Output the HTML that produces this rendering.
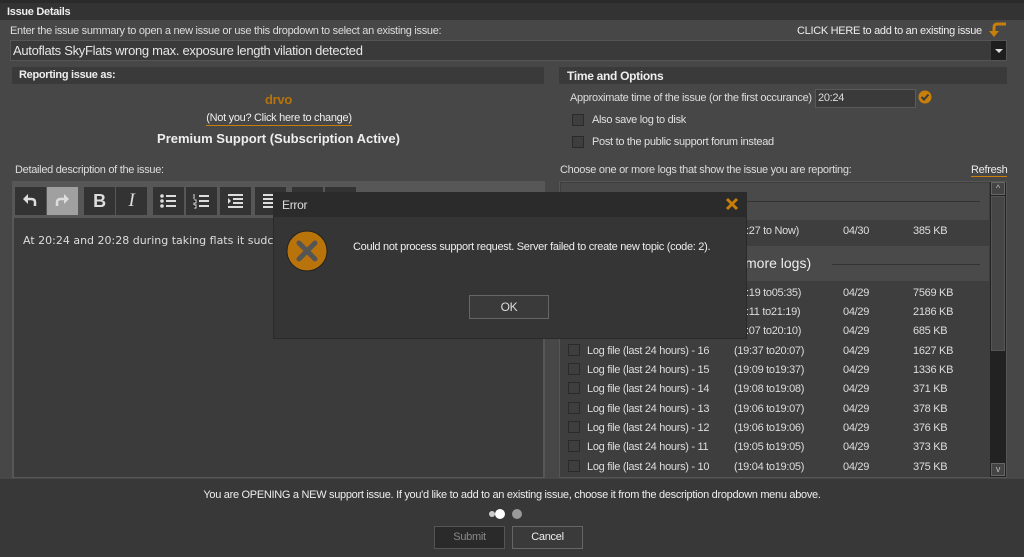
<!DOCTYPE html>
<html><head><meta charset="utf-8"><style>
*{box-sizing:border-box;margin:0;padding:0}
body{width:1024px;height:557px;overflow:hidden;background:#474747;font-family:"Liberation Sans",sans-serif;font-size:11px;color:#e0e0e0;position:relative;letter-spacing:-0.3px}
.a{position:absolute;white-space:nowrap}
.hdr{position:absolute;background:#3a3a3a;font-weight:bold;font-size:11px;color:#eee;padding:2px 0 0 8px;height:17px}
.cb{position:absolute;width:12px;height:12px;border:1px solid #2a2a2a;background:#3e3e3e}
.tb{position:absolute;top:187px;width:31px;height:28px;background:#333;color:#ddd;font-size:17px;text-align:center;line-height:28px}
.tb svg{position:absolute;left:7px;top:6px}
.row{position:absolute;left:560px;width:430px;height:19px;color:#ddd}
.row span{position:absolute;top:3px}
</style></head><body>
<div class="a" style="left:0;top:0;width:1024px;height:20px;background:#333"></div>
<div class="a" style="left:0;top:0;width:1024px;height:3px;background:#2a2a2a"></div>
<div class="a" style="left:7px;top:6px;font-weight:bold;color:#eee">Issue Details</div>
<div class="a" style="left:10px;top:25px;color:#ddd">Enter the issue summary to open a new issue or use this dropdown to select an existing issue:</div>
<div class="a" style="left:797px;top:25px;color:#eee">CLICK HERE to add to an existing issue</div>
<svg class="a" style="left:988px;top:21px" width="20" height="18" viewBox="0 0 20 18"><path d="M18 3 H9 Q6 3 6 7 V11" stroke="#c87f0a" stroke-width="3" fill="none"/><path d="M1 10 L11 10 L6 16Z" fill="#c87f0a"/></svg>
<div class="a" style="left:10px;top:40px;width:997px;height:21px;background:#3a3a3a;border:1px solid #555;font-size:13px;color:#e6e6e6;padding:2px 0 0 2px">Autoflats SkyFlats wrong max. exposure length vilation detected</div>
<div class="a" style="left:991px;top:41px;width:15px;height:19px;background:#1e1e1e"></div>
<div class="a" style="left:995px;top:49px;border:4px solid transparent;border-top:4px solid #ddd"></div>
<div class="hdr" style="left:12px;top:67px;width:532px;padding-left:7px">Reporting issue as:</div>
<div class="hdr" style="left:559px;top:67px;width:448px;font-size:12px">Time and Options</div>
<div class="a" style="left:0;width:557px;text-align:center;top:92px;color:#b8730a;font-size:13px;font-weight:bold">drvo</div>
<div class="a" style="left:206px;top:112px;color:#eee;border-bottom:1px solid #c87f0a;padding-bottom:1px;width:146px;text-align:center">(Not you? Click here to change)</div>
<div class="a" style="left:0;width:557px;text-align:center;top:131px;font-size:13px;font-weight:bold;color:#eee;letter-spacing:0">Premium Support (Subscription Active)</div>
<div class="a" style="left:15px;top:164px;color:#ddd">Detailed description of the issue:</div>
<div class="a" style="left:12px;top:181px;width:533px;height:297px;background:#575757"></div>
<div class="a" style="left:14px;top:218px;width:529px;height:259px;background:#3b3b3b"></div>
<div class="tb" style="left:15px"><svg width="16" height="16"><path d="M13 13 V9 Q13 6 9 6 H3" stroke="#ddd" stroke-width="2.5" fill="none"/><path d="M1 6 L6 1 V11Z" fill="#ddd"/></svg></div>
<div class="tb" style="left:47px;background:#a0a0a0"><svg width="16" height="16"><path d="M3 13 V9 Q3 6 7 6 H13" stroke="#ddd" stroke-width="2.5" fill="none"/><path d="M15 6 L10 1 V11Z" fill="#ddd"/></svg></div>
<div class="tb" style="left:84px;font-weight:bold;font-size:18px">B</div>
<div class="tb" style="left:116px;font-style:italic;font-family:'Liberation Serif';font-size:19px">I</div>
<div class="tb" style="left:153px"><svg width="16" height="16"><circle cx="2" cy="3" r="1.8" fill="#ddd"/><circle cx="2" cy="8" r="1.8" fill="#ddd"/><circle cx="2" cy="13" r="1.8" fill="#ddd"/><path d="M6 3H16M6 8H16M6 13H16" stroke="#ddd" stroke-width="2"/></svg></div>
<div class="tb" style="left:186px"><svg width="16" height="16"><path d="M1 1V6M1 7H3V10H1V12M1 12H3V15H1" stroke="#ddd" stroke-width="1"/><path d="M6 3H16M6 8H16M6 13H16" stroke="#ddd" stroke-width="2"/></svg></div>
<div class="tb" style="left:220px"><svg width="16" height="16"><path d="M1 2H16M6 6H16M6 10H16M1 14H16" stroke="#ddd" stroke-width="2"/><path d="M1 5L4 8L1 11Z" fill="#ddd"/></svg></div>
<div class="tb" style="left:255px"><svg width="16" height="16"><path d="M1 2H16M1 6H11M1 10H11M1 14H16" stroke="#ddd" stroke-width="2"/><path d="M16 5L13 8L16 11Z" fill="#ddd"/></svg></div>
<div class="tb" style="left:292px"></div>
<div class="tb" style="left:325px"></div>
<div class="a" style="left:23px;top:234px;font-family:'DejaVu Sans';font-size:11px;color:#ddd;letter-spacing:0">At 20:24 and 20:28 during taking flats it sudc</div>
<div class="a" style="left:570px;top:92px;color:#ddd">Approximate time of the issue (or the first occurance)</div>
<div class="a" style="left:815px;top:89px;width:101px;height:19px;background:#3a3a3a;border:1px solid #5a5a5a;padding:2px 0 0 2px;color:#ddd">20:24</div>
<svg class="a" style="left:918px;top:90px" width="14" height="14"><circle cx="7" cy="7" r="6.5" fill="#c87f0a"/><path d="M3.5 7 L6 9.5 L10.5 4.5" stroke="#3a3a3a" stroke-width="2" fill="none"/></svg>
<div class="cb" style="left:572px;top:114px"></div><div class="a" style="left:592px;top:114px">Also save log to disk</div>
<div class="cb" style="left:572px;top:136px"></div><div class="a" style="left:592px;top:136px">Post to the public support forum instead</div>
<div class="a" style="left:560px;top:164px;color:#ddd">Choose one or more logs that show the issue you are reporting:</div>
<div class="a" style="left:971px;top:164px;color:#eee;border-bottom:1px solid #c87f0a">Refresh</div>
<div class="a" style="left:559px;top:181px;width:448px;height:297px;background:#3e3e3e;border:1px solid #555"></div>
<div class="a" style="left:561px;top:183px;width:428px;height:37px;background:#4a4a4a"></div>
<div class="a" style="left:740px;top:201px;width:240px;height:1px;background:#333"></div>
<div class="a" style="left:561px;top:246px;width:428px;height:35px;background:#4a4a4a"></div>
<div class="a" style="left:745px;top:255px;font-size:14px;color:#eee;letter-spacing:0">more logs)</div>
<div class="a" style="left:832px;top:264px;width:148px;height:1px;background:#333"></div>
<div class="a" style="left:990px;top:182px;width:16px;height:295px;background:#222"></div>
<div class="a" style="left:991px;top:182px;width:14px;height:13px;border:1px solid #666;background:#444;color:#bbb;font-size:9px;text-align:center;line-height:10px">^</div>
<div class="a" style="left:991px;top:196px;width:14px;height:155px;background:#464646;border:1px solid #555"></div>
<div class="a" style="left:991px;top:463px;width:14px;height:13px;border:1px solid #666;background:#444;color:#bbb;font-size:9px;text-align:center;line-height:10px">v</div>
<div class="row" style="top:222px"><span style="left:186px">:27 to Now)</span><span style="left:283px">04/30</span><span style="left:353px">385 KB</span></div>
<div class="row" style="top:284px"><span style="left:186px">:19 to05:35)</span><span style="left:283px">04/29</span><span style="left:353px">7569 KB</span></div>
<div class="row" style="top:303px"><span style="left:186px">:11 to21:19)</span><span style="left:283px">04/29</span><span style="left:353px">2186 KB</span></div>
<div class="row" style="top:322px"><span style="left:186px">:07 to20:10)</span><span style="left:283px">04/29</span><span style="left:353px">685 KB</span></div>
<div class="row" style="top:342px"><div class="cb" style="left:8px;top:2px"></div><span style="left:27px">Log file (last 24 hours) - 16</span><span style="left:174px">(19:37 to20:07)</span><span style="left:283px">04/29</span><span style="left:353px">1627 KB</span></div>
<div class="row" style="top:361px"><div class="cb" style="left:8px;top:2px"></div><span style="left:27px">Log file (last 24 hours) - 15</span><span style="left:174px">(19:09 to19:37)</span><span style="left:283px">04/29</span><span style="left:353px">1336 KB</span></div>
<div class="row" style="top:380px"><div class="cb" style="left:8px;top:2px"></div><span style="left:27px">Log file (last 24 hours) - 14</span><span style="left:174px">(19:08 to19:08)</span><span style="left:283px">04/29</span><span style="left:353px">371 KB</span></div>
<div class="row" style="top:400px"><div class="cb" style="left:8px;top:2px"></div><span style="left:27px">Log file (last 24 hours) - 13</span><span style="left:174px">(19:06 to19:07)</span><span style="left:283px">04/29</span><span style="left:353px">378 KB</span></div>
<div class="row" style="top:419px"><div class="cb" style="left:8px;top:2px"></div><span style="left:27px">Log file (last 24 hours) - 12</span><span style="left:174px">(19:06 to19:06)</span><span style="left:283px">04/29</span><span style="left:353px">376 KB</span></div>
<div class="row" style="top:438px"><div class="cb" style="left:8px;top:2px"></div><span style="left:27px">Log file (last 24 hours) - 11</span><span style="left:174px">(19:05 to19:05)</span><span style="left:283px">04/29</span><span style="left:353px">373 KB</span></div>
<div class="row" style="top:458px"><div class="cb" style="left:8px;top:2px"></div><span style="left:27px">Log file (last 24 hours) - 10</span><span style="left:174px">(19:04 to19:05)</span><span style="left:283px">04/29</span><span style="left:353px">375 KB</span></div>
<div class="a" style="left:0;top:479px;width:1024px;height:78px;background:#383838"></div>
<div class="a" style="left:0;width:1024px;text-align:center;top:489px;color:#eee">You are OPENING a NEW support issue. If you'd like to add to an existing issue, choose it from the description dropdown menu above.</div>
<div class="a" style="left:489px;top:511px;width:6px;height:6px;border-radius:3px;background:#ccc"></div>
<div class="a" style="left:495px;top:509px;width:10px;height:10px;border-radius:5px;background:#fff"></div>
<div class="a" style="left:512px;top:509px;width:10px;height:10px;border-radius:5px;background:#999"></div>
<div class="a" style="left:434px;top:526px;width:71px;height:23px;background:#2a2a2a;border:1px solid #555;color:#888;text-align:center;line-height:21px">Submit</div>
<div class="a" style="left:512px;top:526px;width:71px;height:23px;background:#3a3a3a;border:1px solid #666;color:#eee;text-align:center;line-height:21px">Cancel</div>
<div class="a" style="left:273px;top:192px;width:474px;height:147px;background:#353535;border:1px solid #2a2a2a"></div>
<div class="a" style="left:273px;top:192px;width:474px;height:25px;background:#2b2b2b"></div>
<div class="a" style="left:282px;top:198px;font-size:12px;color:#ddd">Error</div>
<svg class="a" style="left:725px;top:197px" width="14" height="14"><path d="M2 2L12 12M12 2L2 12" stroke="#c87f0a" stroke-width="3"/></svg>
<svg class="a" style="left:286px;top:230px" width="42" height="42"><circle cx="21" cy="21" r="20" fill="#b8730a" stroke="#222" stroke-width="1"/><path d="M13 13 L29 29 M29 13 L13 29" stroke="#555" stroke-width="5" stroke-linecap="round"/></svg>
<div class="a" style="left:353px;top:241px;color:#eee">Could not process support request. Server failed to create new topic (code: 2).</div>
<div class="a" style="left:469px;top:295px;width:80px;height:24px;border:1px solid #666;background:#3a3a3a;text-align:center;line-height:22px;font-size:12px;color:#ddd">OK</div>
</body></html>
